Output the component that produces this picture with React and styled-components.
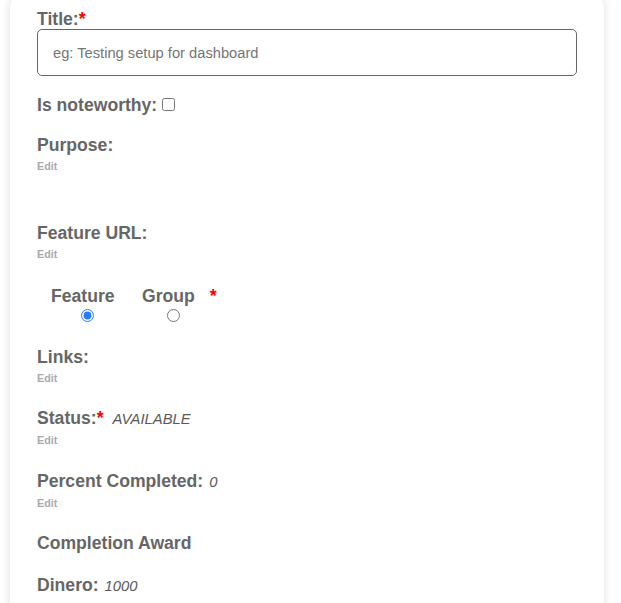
import React from 'react'
import styled, { createGlobalStyle } from 'styled-components'

const GlobalStyle = createGlobalStyle`
  html, body {
    margin: 0;
    padding: 0;
    background: #fff;
    font-family: "Liberation Sans", Arial, Helvetica, sans-serif;
  }
`

const Page = styled.div`
  padding: 0 17px 0 10px;
  overflow: hidden;
  height: 603px;
`

const Card = styled.form`
  margin-top: -5px;
  background: #fff;
  border-radius: 12px;
  box-shadow: 0 0 10px rgba(0, 0, 0, 0.13);
  padding: 14px 27px 40px;
  display: flex;
  flex-direction: column;
`

const Field = styled.div`
  display: flex;
  flex-direction: column;
  margin-bottom: ${(p) => p.$gap || 22}px;
`

const Label = styled.div`
  font-size: 17.6px;
  font-weight: bold;
  color: #666;
  line-height: 20px;
  white-space: nowrap;
`

const Star = styled.span`
  color: #f00;
  margin-right: ${(p) => p.$after || 0}px;
`

const Value = styled.span`
  font-size: 14.8px;
  font-weight: normal;
  font-style: italic;
  color: #5a5a5a;
  margin-left: ${(p) => p.$offset || 5}px;
`

const Edit = styled.span`
  margin-top: 5px;
  margin-bottom: 2px;
  font-size: 10.8px;
  font-weight: bold;
  color: #aaa;
  line-height: 12px;
  cursor: pointer;
  align-self: flex-start;
`

const Blank = styled.div`
  height: 27px;
`

const TextInput = styled.input`
  box-sizing: border-box;
  width: 100%;
  height: 47px;
  margin: 0;
  padding: 0 15px;
  border: 1px solid #666;
  border-radius: 5px;
  font-family: "Liberation Sans", Arial, sans-serif;
  font-size: 14.7px;
  color: #333;
  outline: none;
  &::placeholder {
    color: #757575;
  }
`

const Check = styled.input`
  margin: 0 0 0 5px;
  width: 13px;
  height: 13px;
  vertical-align: baseline;
`

const RadioRow = styled.div`
  display: flex;
  align-items: flex-start;
  padding-left: 14px;
  margin-bottom: 25px;
`

const Option = styled.label`
  display: flex;
  flex-direction: column;
  align-items: center;
  margin-right: ${(p) => p.$space || 0}px;
  font-size: 17.6px;
  font-weight: bold;
  line-height: 20px;
  color: #666;
  cursor: pointer;
`

const Radio = styled.input`
  margin: 3px 3px 0 13px;
  width: 13px;
  height: 13px;
  accent-color: #2a7af5;
`

const RadioStar = styled.span`
  margin-left: 15px;
  font-size: 17.6px;
  font-weight: bold;
  line-height: 20px;
  color: #f00;
`

export default function App() {
  return (
    <>
      <GlobalStyle />
      <Page>
        <Card onSubmit={(e) => e.preventDefault()}>
          <Field $gap={19}>
            <Label>
              Title:<Star>*</Star>
            </Label>
            <TextInput type="text" placeholder="eg: Testing setup for dashboard" />
          </Field>

          <Field $gap={20}>
            <Label>
              Is noteworthy:<Check type="checkbox" />
            </Label>
          </Field>

          <Field>
            <Label>Purpose:</Label>
            <Edit>Edit</Edit>
            <Blank />
          </Field>

          <Field $gap={24}>
            <Label>Feature URL:</Label>
            <Edit>Edit</Edit>
          </Field>

          <RadioRow>
            <Option $space={27.5}>
              Feature
              <Radio type="radio" name="kind" defaultChecked />
            </Option>
            <Option>
              Group
              <Radio type="radio" name="kind" />
            </Option>
            <RadioStar>*</RadioStar>
          </RadioRow>

          <Field>
            <Label>Links:</Label>
            <Edit>Edit</Edit>
          </Field>

          <Field $gap={23}>
            <Label>
              Status:<Star $after={4}>*</Star>
              <Value>AVAILABLE</Value>
            </Label>
            <Edit>Edit</Edit>
          </Field>

          <Field>
            <Label>
              Percent Completed:<Value $offset={6}>0</Value>
            </Label>
            <Edit>Edit</Edit>
          </Field>

          <Field $gap={22}>
            <Label>Completion Award</Label>
          </Field>

          <Field>
            <Label>
              Dinero:<Value $offset={6}>1000</Value>
            </Label>
          </Field>
        </Card>
      </Page>
    </>
  )
}
